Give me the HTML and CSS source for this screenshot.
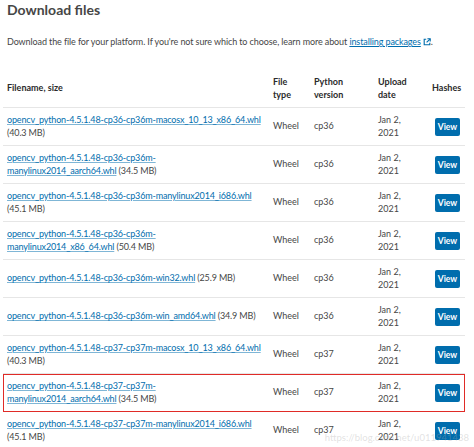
FILE: index.html
```html
<!DOCTYPE html>
<html>
<head>
<meta charset="utf-8">
<link rel="stylesheet" href="styles.css">
</head>
<body>
<div class="page">
  <h2 class="title">Download files</h2>
  <p class="intro">Download the file for your platform. If you're not sure which to choose, learn more about <a href="#" class="ext">installing packages<svg class="ext-icon" viewBox="0 0 10 10" width="8" height="8"><path d="M4 1.5H1.5v7h7V6" fill="none" stroke="#006dad" stroke-width="1.4"/><path d="M5.5 1h3.5v3.5" fill="none" stroke="#006dad" stroke-width="1.4"/><path d="M9 1L4.5 5.5" stroke="#006dad" stroke-width="1.4"/></svg></a>.</p>
  <table class="files">
    <thead>
      <tr>
        <th class="c-name">Filename, size</th>
        <th class="c-type">File<br>type</th>
        <th class="c-py">Python<br>version</th>
        <th class="c-date">Upload<br>date</th>
        <th class="c-hash">Hashes</th>
      </tr>
    </thead>
    <tbody>
      <tr>
        <td><a href="#">opencv_python-4.5.1.48-cp36-cp36m-macosx_10_13_x86_64.whl</a><br>(40.3 MB)</td>
        <td>Wheel</td><td>cp36</td><td>Jan 2,<br>2021</td><td><span class="btn">View</span></td>
      </tr>
      <tr>
        <td><a href="#">opencv_python-4.5.1.48-cp36-cp36m-<br>manylinux2014_aarch64.whl</a> (34.5 MB)</td>
        <td>Wheel</td><td>cp36</td><td>Jan 2,<br>2021</td><td><span class="btn">View</span></td>
      </tr>
      <tr>
        <td><a href="#">opencv_python-4.5.1.48-cp36-cp36m-manylinux2014_i686.whl</a><br>(45.1 MB)</td>
        <td>Wheel</td><td>cp36</td><td>Jan 2,<br>2021</td><td><span class="btn">View</span></td>
      </tr>
      <tr>
        <td><a href="#">opencv_python-4.5.1.48-cp36-cp36m-<br>manylinux2014_x86_64.whl</a> (50.4 MB)</td>
        <td>Wheel</td><td>cp36</td><td>Jan 2,<br>2021</td><td><span class="btn">View</span></td>
      </tr>
      <tr>
        <td><a href="#">opencv_python-4.5.1.48-cp36-cp36m-win32.whl</a> (25.9 MB)</td>
        <td>Wheel</td><td>cp36</td><td>Jan 2,<br>2021</td><td><span class="btn">View</span></td>
      </tr>
      <tr>
        <td><a href="#">opencv_python-4.5.1.48-cp36-cp36m-win_amd64.whl</a> (34.9 MB)</td>
        <td>Wheel</td><td>cp36</td><td>Jan 2,<br>2021</td><td><span class="btn">View</span></td>
      </tr>
      <tr>
        <td><a href="#">opencv_python-4.5.1.48-cp37-cp37m-macosx_10_13_x86_64.whl</a><br>(40.3 MB)</td>
        <td>Wheel</td><td>cp37</td><td>Jan 2,<br>2021</td><td><span class="btn">View</span></td>
      </tr>
      <tr class="marked">
        <td><a href="#">opencv_python-4.5.1.48-cp37-cp37m-<br>manylinux2014_aarch64.whl</a> (34.5 MB)</td>
        <td>Wheel</td><td>cp37</td><td>Jan 2,<br>2021</td><td><span class="btn">View</span></td>
      </tr>
      <tr>
        <td><a href="#">opencv_python-4.5.1.48-cp37-cp37m-manylinux2014_i686.whl</a><br>(45.1 MB)</td>
        <td>Wheel</td><td>cp37</td><td>Jan 2,<br>2021</td><td><span class="btn">View</span></td>
      </tr>
    </tbody>
  </table>
  <div class="watermark">https://blog.csdn.net/u011941438</div>
</div>
</body>
</html>
```
FILE: styles.css
```css
html, body {
  margin: 0;
  padding: 0;
  background: #ffffff;
}
body {
  font-family: Lato, "Liberation Sans", sans-serif;
  color: #464646;
  font-size: 9px;
}
.page {
  position: relative;
  width: 474px;
  height: 447px;
  overflow: hidden;
  padding: 0 0 0 3px;
  box-sizing: border-box;
}
.title {
  margin: 0 0 0 4px;
  padding-top: 1px;
  font-size: 14px;
  line-height: 18px;
  font-weight: 700;
  color: #464646;
}
.intro {
  margin: 17px 0 0 4px;
  line-height: 12px;
  font-size: 9px;
  letter-spacing: -0.1px;
  white-space: nowrap;
}
.intro a {
  color: #006dad;
  text-decoration: underline;
}
.ext-icon {
  margin-left: 2px;
  vertical-align: -1px;
}
.files {
  margin-top: 22px;
  width: 462px;
  border-collapse: collapse;
  table-layout: fixed;
}
.files th, .files td {
  text-align: left;
  padding: 0 0 0 4px;
  vertical-align: middle;
  line-height: 12.5px;
  white-space: nowrap;
}
.files th {
  font-weight: 700;
  color: #2b2b2b;
  height: 37px;
  border-bottom: 1px solid #e6e6e6;
}
.files td {
  height: 37px;
  border-bottom: 1px solid #e6e6e6;
}
.files td:first-child {
  letter-spacing: -0.15px;
}
.c-name { width: 262px; }
.c-type { width: 37px; }
.c-py { width: 60px; }
.c-date { width: 50px; }
.c-hash { width: 33px; }
.files td a {
  color: #006dad;
  text-decoration: underline;
  text-decoration-color: #7fb6d6;
}
.btn {
  display: inline-block;
  width: 25px;
  height: 18px;
  margin-left: 3px;
  line-height: 18px;
  text-align: center;
  background: #006dad;
  color: #ffffff;
  font-weight: 700;
  font-size: 8.5px;
  border-radius: 2px;
}
.marked {
  outline: 1.5px solid #e02b27;
  outline-offset: -1px;
}
.watermark {
  position: absolute;
  right: 5px;
  bottom: 4px;
  font-size: 9.5px;
  color: rgba(170, 170, 170, 0.35);
}
```
